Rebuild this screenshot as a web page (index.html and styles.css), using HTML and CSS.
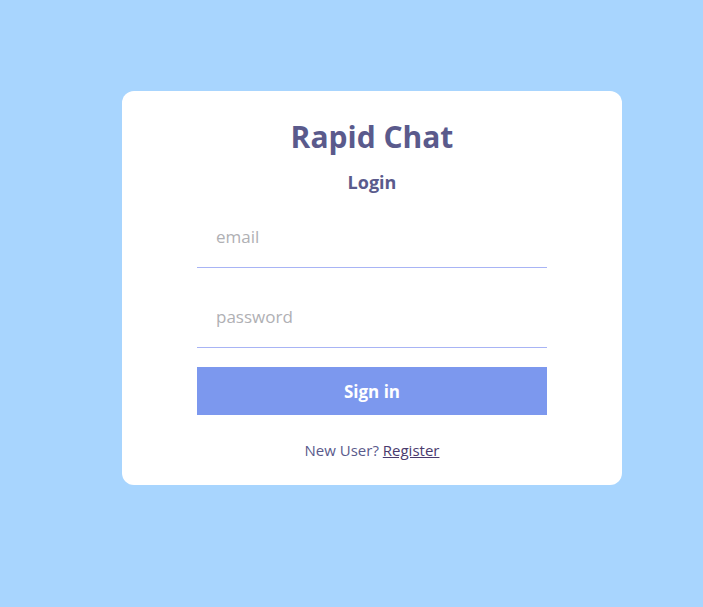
FILE: index.html
```html
<!DOCTYPE html>
<html>
<head>
<meta charset="utf-8">
<link rel="stylesheet" href="styles.css">
</head>
<body>
<div class="card">
  <h1 class="title">Rapid Chat</h1>
  <h2 class="subtitle">Login</h2>
  <form class="form">
    <input class="field" type="email" placeholder="email">
    <input class="field" type="password" placeholder="password">
    <button class="btn" type="button">Sign in</button>
  </form>
  <p class="foot">New User? <a class="link" href="#">Register</a></p>
</div>
</body>
</html>
```
FILE: styles.css
```css
html, body {
  margin: 0;
  padding: 0;
}
body {
  background: #a8d5fe;
  font-family: "Open Sans", "Noto Sans", sans-serif;
  min-height: 607px;
  padding-top: 91px;
  box-sizing: border-box;
}
.card {
  margin-left: 122px;
  width: 500px;
  height: 394px;
  background: #fff;
  border-radius: 12px;
  box-sizing: border-box;
  padding-top: 18px;
  display: flex;
  flex-direction: column;
  align-items: center;
}
.title {
  margin: 0;
  font-size: 30px;
  font-weight: 700;
  line-height: 56px;
  color: #5a5a8c;
}
.subtitle {
  margin: 0;
  font-size: 18px;
  font-weight: 700;
  line-height: 34px;
  color: #5a5a8c;
}
.form {
  width: 350px;
  display: flex;
  flex-direction: column;
  margin-top: 8px;
}
.field {
  height: 61px;
  border: none;
  border-bottom: 1px solid #a8b4f5;
  margin: 0 0 19px 0;
  padding: 0 19px 1px;
  font-family: inherit;
  font-size: 17px;
  color: #555;
  box-sizing: border-box;
  outline: none;
  background: transparent;
}
.field::placeholder {
  color: #b0b0b4;
}
.btn {
  height: 48px;
  border: none;
  background: #7c98ee;
  color: #fff;
  font-family: inherit;
  font-size: 17px;
  font-weight: 700;
  cursor: pointer;
}
.foot {
  margin: 23px 0 0 0;
  font-size: 15px;
  line-height: 24px;
  color: #5a5a8c;
}
.link {
  color: #4a3b6e;
  text-decoration: underline;
}
```
